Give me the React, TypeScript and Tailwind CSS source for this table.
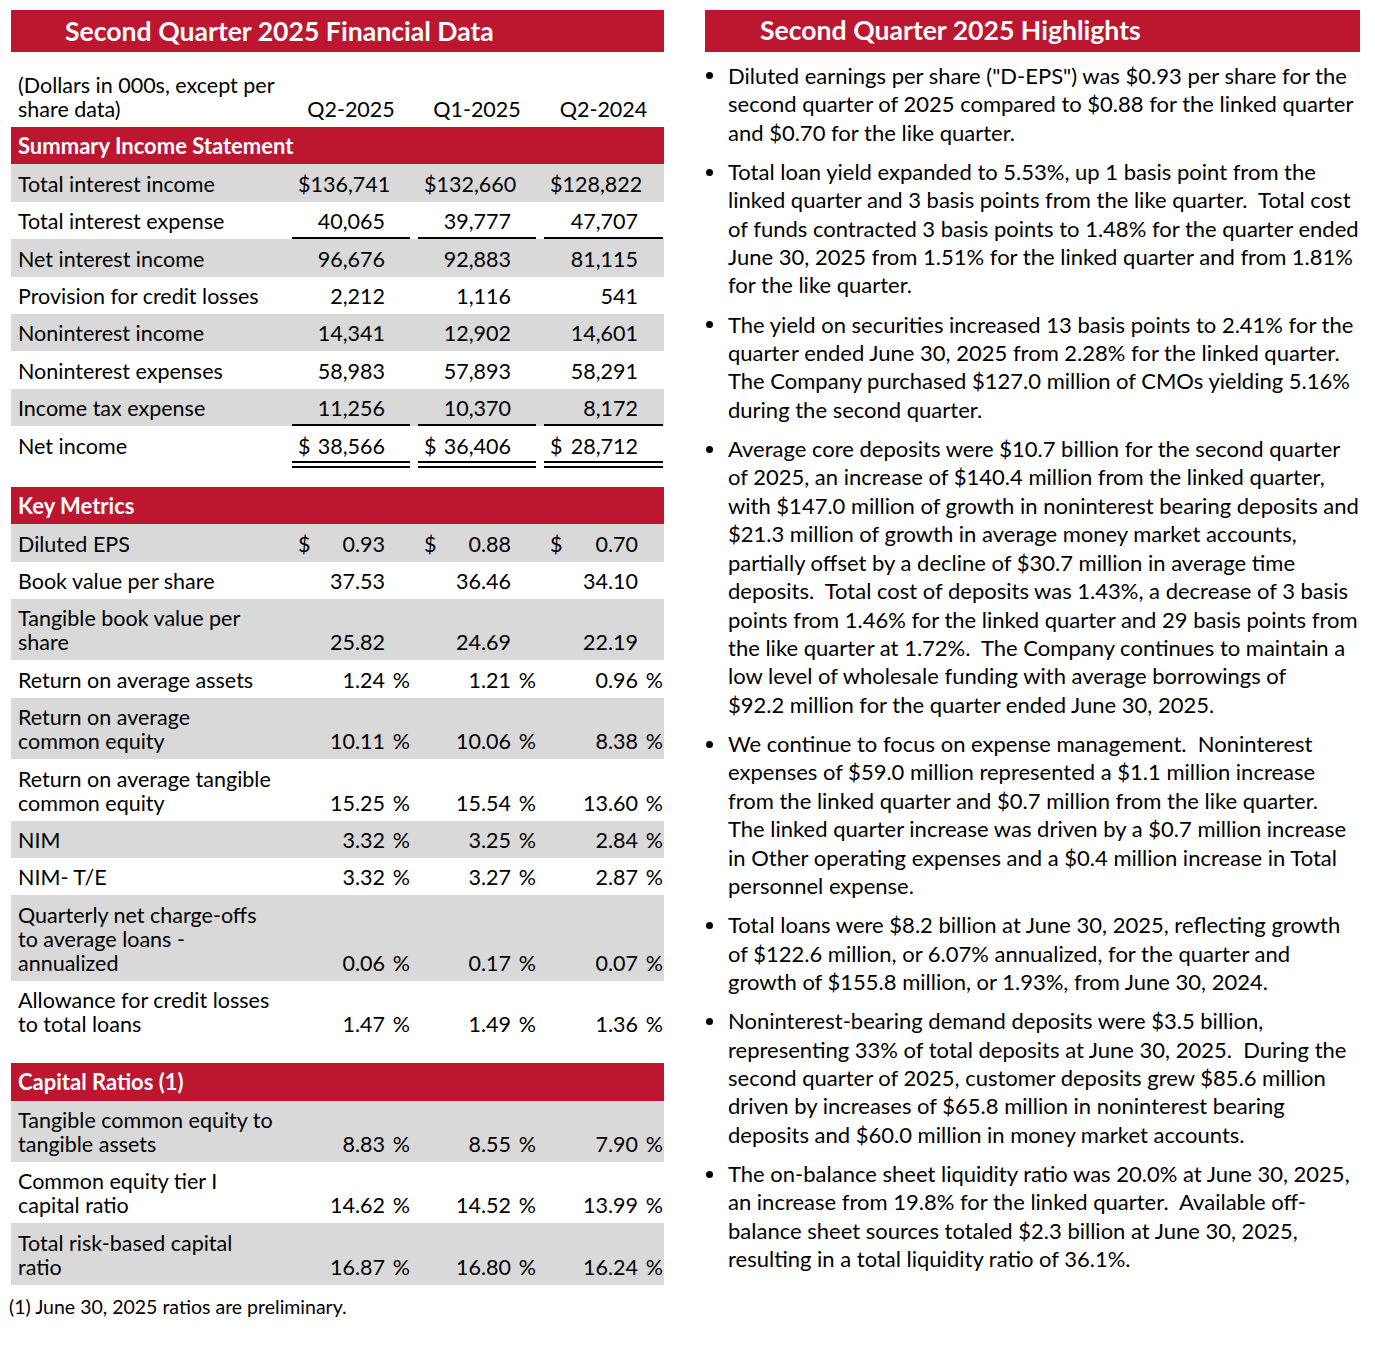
import React from "react";

type Row = {
  label: string[];
  vals: string[];
  gray: boolean;
  pct?: boolean;
  dollar?: boolean;
  under?: "single" | "double";
};

const income: Row[] = [
  { label: ["Total interest income"], vals: ["$136,741", "$132,660", "$128,822"], gray: true },
  { label: ["Total interest expense"], vals: ["40,065", "39,777", "47,707"], gray: false, under: "single" },
  { label: ["Net interest income"], vals: ["96,676", "92,883", "81,115"], gray: true },
  { label: ["Provision for credit losses"], vals: ["2,212", "1,116", "541"], gray: false },
  { label: ["Noninterest income"], vals: ["14,341", "12,902", "14,601"], gray: true },
  { label: ["Noninterest expenses"], vals: ["58,983", "57,893", "58,291"], gray: false },
  { label: ["Income tax expense"], vals: ["11,256", "10,370", "8,172"], gray: true, under: "single" },
  { label: ["Net income"], vals: ["38,566", "36,406", "28,712"], gray: false, under: "double", dollar: true },
];

const metrics: Row[] = [
  { label: ["Diluted EPS"], vals: ["0.93", "0.88", "0.70"], gray: true, dollar: true },
  { label: ["Book value per share"], vals: ["37.53", "36.46", "34.10"], gray: false },
  { label: ["Tangible book value per", "share"], vals: ["25.82", "24.69", "22.19"], gray: true },
  { label: ["Return on average assets"], vals: ["1.24", "1.21", "0.96"], gray: false, pct: true },
  { label: ["Return on average", "common equity"], vals: ["10.11", "10.06", "8.38"], gray: true, pct: true },
  { label: ["Return on average tangible", "common equity"], vals: ["15.25", "15.54", "13.60"], gray: false, pct: true },
  { label: ["NIM"], vals: ["3.32", "3.25", "2.84"], gray: true, pct: true },
  { label: ["NIM- T/E"], vals: ["3.32", "3.27", "2.87"], gray: false, pct: true },
  { label: ["Quarterly net charge-offs", "to average loans -", "annualized"], vals: ["0.06", "0.17", "0.07"], gray: true, pct: true },
  { label: ["Allowance for credit losses", "to total loans"], vals: ["1.47", "1.49", "1.36"], gray: false, pct: true },
];

const capital: Row[] = [
  { label: ["Tangible common equity to", "tangible assets"], vals: ["8.83", "8.55", "7.90"], gray: true, pct: true },
  { label: ["Common equity tier I", "capital ratio"], vals: ["14.62", "14.52", "13.99"], gray: false, pct: true },
  { label: ["Total risk-based capital", "ratio"], vals: ["16.87", "16.80", "16.24"], gray: true, pct: true },
];

const colW = ["w-[118px]", "w-[118px]", "w-[119px]"];
const gapW = ["w-0", "w-[8px]", "w-[8px]"];

function ValueCell({ v, row, idx }: { v: string; row: Row; idx: number }) {
  const border =
    row.under === "single"
      ? "border-b-2 border-black pb-[4px]"
      : row.under === "double"
      ? "border-b-[7px] border-double border-black pb-[3px]"
      : "pb-[6px]";
  return (
    <>
      <div className={`${gapW[idx]} shrink-0`} />
      <div className={`${colW[idx]} shrink-0 self-stretch flex items-end pl-[6px] ${border}`}>
        <span>{row.dollar ? "$" : ""}</span>
        <span className="ml-auto">{v}</span>
        <span className="w-[25px] shrink-0 text-right">{row.pct ? "%" : ""}</span>
      </div>
    </>
  );
}

function TableRow({ row }: { row: Row }) {
  const n = row.label.length;
  const h =
    row.under === "double"
      ? "h-[42px]"
      : n === 1
      ? "h-[37.4px]"
      : n === 2
      ? "h-[61.4px]"
      : "h-[85.4px]";
  return (
    <div className={`flex items-end ${h} ${row.gray ? "bg-[#d9d9d9]" : "bg-white"}`}>
      <div className={`w-[281px] shrink-0 pl-[7px] whitespace-nowrap ${row.under === "double" ? "pb-[10px]" : "pb-[6px]"}`}>
        {row.label.map((l, i) => (
          <div key={i}>{l}</div>
        ))}
      </div>
      {row.vals.map((v, i) => (
        <ValueCell key={i} v={v} row={row} idx={i} />
      ))}
    </div>
  );
}

function SectionBar({ title }: { title: string }) {
  return (
    <div className="h-[37.4px] bg-[#bd1630] flex items-center pl-[7px] text-white font-bold text-[22px] whitespace-nowrap">
      {title}
    </div>
  );
}

const bullets: string[][] = [
  [
    'Diluted earnings per share ("D-EPS") was $0.93 per share for the',
    "second quarter of 2025 compared to $0.88 for the linked quarter",
    "and $0.70 for the like quarter.",
  ],
  [
    "Total loan yield expanded to 5.53%, up 1 basis point from the",
    "linked quarter and 3 basis points from the like quarter.  Total cost",
    "of funds contracted 3 basis points to 1.48% for the quarter ended",
    "June 30, 2025 from 1.51% for the linked quarter and from 1.81%",
    "for the like quarter.",
  ],
  [
    "The yield on securities increased 13 basis points to 2.41% for the",
    "quarter ended June 30, 2025 from 2.28% for the linked quarter.",
    "The Company purchased $127.0 million of CMOs yielding 5.16%",
    "during the second quarter.",
  ],
  [
    "Average core deposits were $10.7 billion for the second quarter",
    "of 2025, an increase of $140.4 million from the linked quarter,",
    "with $147.0 million of growth in noninterest bearing deposits and",
    "$21.3 million of growth in average money market accounts,",
    "partially offset by a decline of $30.7 million in average time",
    "deposits.  Total cost of deposits was 1.43%, a decrease of 3 basis",
    "points from 1.46% for the linked quarter and 29 basis points from",
    "the like quarter at 1.72%.  The Company continues to maintain a",
    "low level of wholesale funding with average borrowings of",
    "$92.2 million for the quarter ended June 30, 2025.",
  ],
  [
    "We continue to focus on expense management.  Noninterest",
    "expenses of $59.0 million represented a $1.1 million increase",
    "from the linked quarter and $0.7 million from the like quarter.",
    "The linked quarter increase was driven by a $0.7 million increase",
    "in Other operating expenses and a $0.4 million increase in Total",
    "personnel expense.",
  ],
  [
    "Total loans were $8.2 billion at June 30, 2025, reflecting growth",
    "of $122.6 million, or 6.07% annualized, for the quarter and",
    "growth of $155.8 million, or 1.93%, from June 30, 2024.",
  ],
  [
    "Noninterest-bearing demand deposits were $3.5 billion,",
    "representing 33% of total deposits at June 30, 2025.  During the",
    "second quarter of 2025, customer deposits grew $85.6 million",
    "driven by increases of $65.8 million in noninterest bearing",
    "deposits and $60.0 million in money market accounts.",
  ],
  [
    "The on-balance sheet liquidity ratio was 20.0% at June 30, 2025,",
    "an increase from 19.8% for the linked quarter.  Available off-",
    "balance sheet sources totaled $2.3 billion at June 30, 2025,",
    "resulting in a total liquidity ratio of 36.1%.",
  ],
];

export default function App() {
  return (
    <div className="w-[1375px] h-[1354px] bg-white text-black font-['Lato',sans-serif] flex pt-[10px]">
      {/* Left column */}
      <div className="ml-[11px] w-[653px] shrink-0 flex flex-col text-[21.5px] leading-[24px]">
        <div className="h-[42px] bg-[#bd1630] flex items-center pl-[54px] text-white font-bold text-[26.6px] whitespace-nowrap">
          Second Quarter 2025 Financial Data
        </div>
        <div className="h-[75px] flex items-end pb-[6px]">
          <div className="w-[281px] shrink-0 pl-[7px] whitespace-nowrap">
            <div>(Dollars in 000s, except per</div>
            <div>share data)</div>
          </div>
          <div className="w-[118px] shrink-0 text-center">Q2-2025</div>
          <div className="w-[8px] shrink-0" />
          <div className="w-[118px] shrink-0 text-center">Q1-2025</div>
          <div className="w-[8px] shrink-0" />
          <div className="w-[119px] shrink-0 text-center">Q2-2024</div>
        </div>
        <SectionBar title="Summary Income Statement" />
        {income.map((r, i) => (
          <TableRow key={i} row={r} />
        ))}
        <div className="h-[18.8px]" />
        <SectionBar title="Key Metrics" />
        {metrics.map((r, i) => (
          <TableRow key={i} row={r} />
        ))}
        <div className="h-[21px]" />
        <SectionBar title="Capital Ratios (1)" />
        {capital.map((r, i) => (
          <TableRow key={i} row={r} />
        ))}
        <div className="-ml-[2px] mt-[11px] text-[19.5px] leading-[22px] whitespace-nowrap">
          (1) June 30, 2025 ratios are preliminary.
        </div>
      </div>

      {/* Right column */}
      <div className="ml-[41px] w-[655px] shrink-0 flex flex-col">
        <div className="h-[42px] bg-[#bd1630] flex items-center pl-[55px] text-white font-bold text-[26.6px] whitespace-nowrap">
          Second Quarter 2025 Highlights
        </div>
        <div className="mt-[9.8px] flex flex-col gap-[10.8px] text-[22px] leading-[28.4px]">
          {bullets.map((lines, i) => (
            <div key={i} className="flex">
              <div className="w-[23px] shrink-0 pl-[1px] pt-[10.7px]">
                <div className="w-[7px] h-[7px] rounded-full bg-black" />
              </div>
              <div className="whitespace-pre">
                {lines.map((l, j) => (
                  <div key={j}>{l}</div>
                ))}
              </div>
            </div>
          ))}
        </div>
      </div>
    </div>
  );
}
